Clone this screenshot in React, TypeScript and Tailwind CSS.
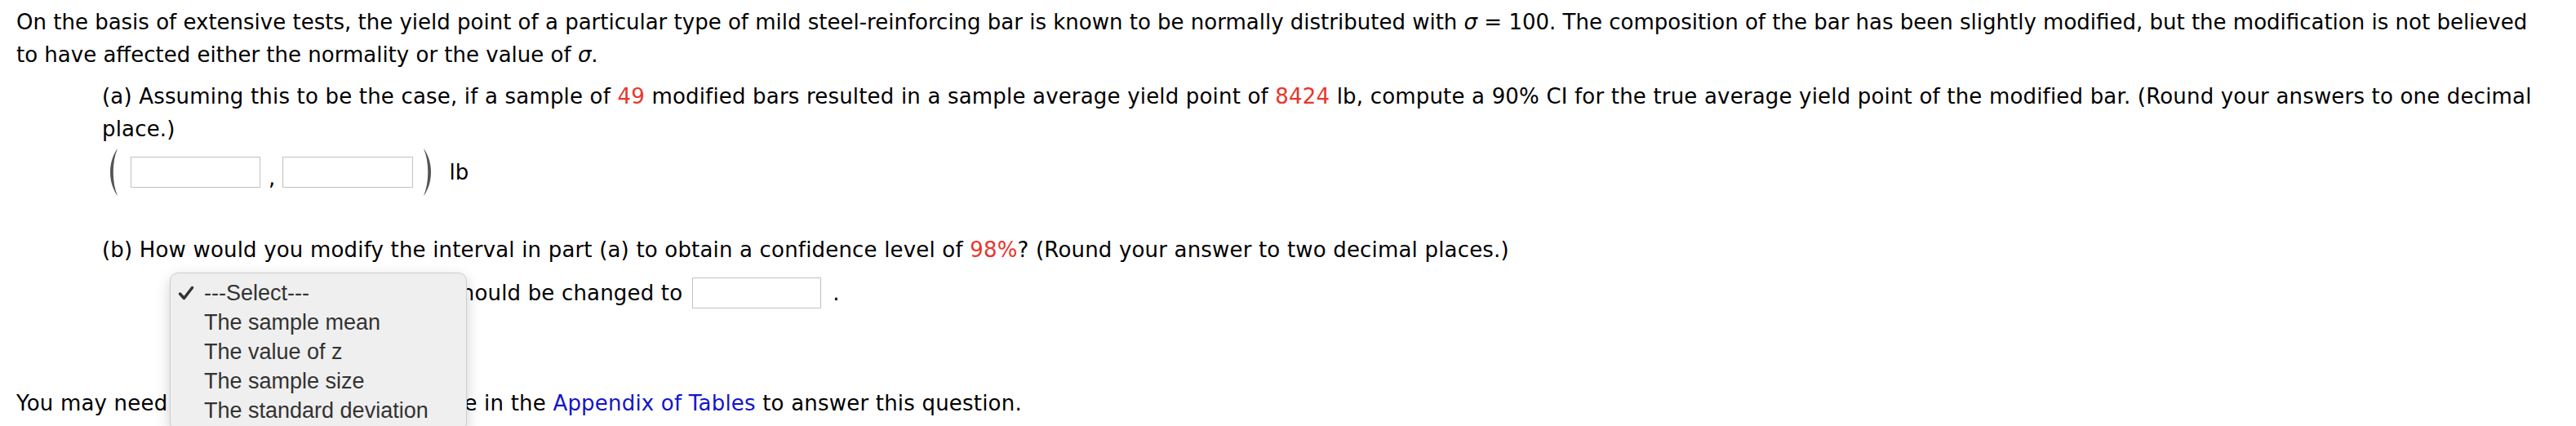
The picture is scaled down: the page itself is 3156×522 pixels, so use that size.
import React from "react";

const red = "text-[#e8372c]";

function Paren({ flip }: { flip?: boolean }) {
  return (
    <svg viewBox="0 0 16 60" className={`h-[60px] w-[16px] ${flip ? "-scale-x-100" : ""}`}>
      <path d="M14 1 C2 17 2 43 14 59 C7 43 7 17 14 1 Z" fill="#555" />
    </svg>
  );
}

function Box({ w }: { w: string }) {
  return <div className={`h-[38px] ${w} border border-[#c2c2c2] bg-white`} />;
}

function Check() {
  return (
    <svg viewBox="0 0 20 18" className="h-[18px] w-[20px]">
      <path d="M2.5 10 L7.5 15.5 L17.5 2.5" fill="none" stroke="#333" strokeWidth={3.5} strokeLinecap="round" strokeLinejoin="round" />
    </svg>
  );
}

const options = ["The sample mean", "The value of z", "The sample size", "The standard deviation"];

export default function App() {
  return (
    <div className="relative h-[522px] overflow-hidden bg-white pl-[20px] pt-[7px] font-['DejaVu_Sans',Verdana,sans-serif] text-[26px] leading-[40px] text-black">
      <p className="whitespace-nowrap">
        On the basis of extensive tests, the yield point of a particular type of mild steel-reinforcing bar is known to be normally distributed with <i>σ</i> = 100. The composition of the bar has been slightly modified, but the modification is not believed
        <br />
        to have affected either the normality or the value of <i>σ</i>.
      </p>

      <div className="ml-[105px] mt-[11px] tracking-[0.18px]">
        <p className="whitespace-nowrap">
          (a) Assuming this to be the case, if a sample of <span className={red}>49</span> modified bars resulted in a sample average yield point of <span className={red}>8424</span> lb, compute a 90% CI for the true average yield point of the modified bar. (Round your answers to one decimal
          <br />
          place.)
        </p>
        <div className="mt-[3px] flex h-[60px] items-center">
          <div className="ml-[5px]">
            <Paren />
          </div>
          <div className="ml-[14px]">
            <Box w="w-[159px]" />
          </div>
          <span className="ml-[10px] mt-[14px]">,</span>
          <div className="ml-[9px]">
            <Box w="w-[160px]" />
          </div>
          <div className="ml-[11px]">
            <Paren flip />
          </div>
          <span className="ml-[17px]">lb</span>
        </div>

        <p className="mt-[45px] whitespace-nowrap">
          (b) How would you modify the interval in part (a) to obtain a confidence level of <span className={red}>98%</span>? (Round your answer to two decimal places.)
        </p>
        <div className="mt-[13px] flex h-[40px] items-center whitespace-nowrap">
          <div className="ml-[87px] h-[36px] w-[330px] rounded-md border border-[#b5b5b5] bg-[#f7f7f7]" />
          <span className="ml-[9px]">should be changed to</span>
          <div className="ml-[12px]">
            <Box w="w-[158px]" />
          </div>
          <span className="ml-[14px]">.</span>
        </div>
      </div>

      <p className="mt-[95px] whitespace-nowrap tracking-[0.2px]">
        You may need to use the appropriate table in the <span className="text-[#1414c8]">Appendix of Tables</span> to answer this question.
      </p>

      <div className="absolute left-[208px] top-[334px] w-[364px] rounded-[10px] border border-[#cdcdcd] bg-[#efefef] py-[6px] font-['Liberation_Sans',Arial,sans-serif] text-[27px] leading-[36px] text-[#333] shadow-[0_6px_18px_rgba(0,0,0,0.18)]">
        <div className="flex items-center">
          <div className="flex w-[41px] pl-[9px]">
            <Check />
          </div>
          <span>---Select---</span>
        </div>
        {options.map((o) => (
          <div key={o} className="pl-[41px]">
            {o}
          </div>
        ))}
      </div>
    </div>
  );
}
